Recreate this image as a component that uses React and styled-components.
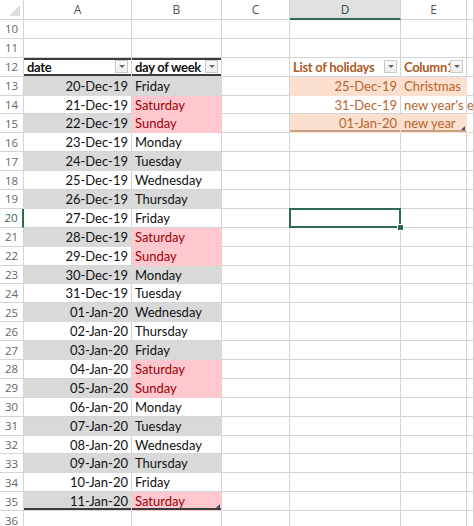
import React from "react";
import styled, { createGlobalStyle, css } from "styled-components";

const GlobalStyle = createGlobalStyle`
  html, body {
    margin: 0;
    padding: 0;
    background: #ffffff;
    overflow: hidden;
  }
`;

const GRID = "#d4d4d4";
const BAND = "#d9d9d9";
const PINK = "#ffc7ce";
const PINK_TEXT = "#9c0006";
const ORANGE = "#fbdfcf";
const ORANGE_TEXT = "#b9642c";
const SELECT = "#2e6b50";

const Sheet = styled.div`
  display: grid;
  grid-template-columns: 24px 108px 90px 68px 111px 66px 1fr;
  grid-template-rows: 20px repeat(27, 18.9px);
  width: 474px;
  height: 526px;
  overflow: hidden;
  font-family: Lato, "Liberation Sans", sans-serif;
  font-size: 13px;
  color: #111;
`;

const Corner = styled.div`
  position: relative;
  box-sizing: border-box;
  border-right: 1px solid ${GRID};
  border-bottom: 1px solid ${GRID};
  &::after {
    content: "";
    position: absolute;
    right: 3px;
    bottom: 3px;
    width: 0;
    height: 0;
    border-left: 11px solid transparent;
    border-bottom: 11px solid #dcdcdc;
  }
`;

const ColHead = styled.div`
  box-sizing: border-box;
  display: flex;
  align-items: center;
  justify-content: center;
  font-family: "Open Sans", "Noto Sans", sans-serif;
  font-size: 12px;
  color: #555;
  border-right: 1px solid ${GRID};
  border-bottom: 1px solid ${GRID};
  ${(p) =>
    p.$active &&
    css`
      background: #e1e1e1;
      color: #2b4f3e;
      border-bottom: 2px solid ${SELECT};
    `}
`;

const RowHead = styled.div`
  box-sizing: border-box;
  display: flex;
  align-items: center;
  justify-content: center;
  font-family: "Open Sans", "Noto Sans", sans-serif;
  font-size: 11.5px;
  color: #666;
  border-right: 1px solid ${GRID};
  border-bottom: 1px solid ${GRID};
  ${(p) =>
    p.$active &&
    css`
      color: ${SELECT};
      border-right: 2px solid ${SELECT};
    `}
`;

const Cell = styled.div`
  box-sizing: border-box;
  display: flex;
  align-items: center;
  justify-content: ${(p) => (p.$align === "right" ? "flex-end" : "flex-start")};
  padding: 0 3px;
  min-width: 0;
  white-space: nowrap;
  background: ${(p) => p.$fill || "transparent"};
  color: ${(p) => p.$color || "#111"};
  font-weight: ${(p) => (p.$bold ? 700 : 400)};
  letter-spacing: ${(p) => (p.$bold ? "-0.3px" : "0")};
  border-right: 1px solid ${(p) => p.$fill || GRID};
  border-bottom: 1px solid ${(p) => p.$fill || GRID};
  box-shadow: ${(p) =>
    [
      p.$top && `inset 0 2px 0 ${p.$top}`,
      p.$bottom && `inset 0 -2px 0 ${p.$bottom}`,
    ]
      .filter(Boolean)
      .join(", ") || "none"};
  ${(p) =>
    p.$selected &&
    css`
      position: relative;
      &::after {
        content: "";
        position: absolute;
        left: -1px;
        top: -1px;
        right: -1px;
        bottom: -1px;
        border: 2px solid ${SELECT};
      }
      &::before {
        content: "";
        position: absolute;
        right: -4px;
        bottom: -4px;
        width: 5px;
        height: 5px;
        background: ${SELECT};
        border: 1px solid #fff;
        z-index: 2;
      }
    `}
  ${(p) =>
    p.$handle &&
    css`
      position: relative;
      &::after {
        content: "";
        position: absolute;
        right: 1px;
        bottom: 2px;
        width: 0;
        height: 0;
        border-left: 4px solid transparent;
        border-bottom: 4px solid #3d4b6b;
      }
    `}
`;

const HeadText = styled.span`
  flex: 1;
  min-width: 0;
  overflow: hidden;
`;

const FilterButton = styled.span`
  flex: none;
  box-sizing: border-box;
  width: 13px;
  height: 13px;
  margin-right: 0;
  border: 1px solid #c8c8c8;
  background: linear-gradient(#fbfbfb, #ececec);
  display: flex;
  align-items: center;
  justify-content: center;
  &::after {
    content: "";
    width: 0;
    height: 0;
    border-left: 3px solid transparent;
    border-right: 3px solid transparent;
    border-top: 3px solid #6a6a6a;
  }
`;

const COLS = ["A", "B", "C", "D", "E", "F"];
const MONTHS = ["Jan", "Feb", "Mar", "Apr", "May", "Jun", "Jul", "Aug", "Sep", "Oct", "Nov", "Dec"];
const DAYS = ["Sunday", "Monday", "Tuesday", "Wednesday", "Thursday", "Friday", "Saturday"];

const fmt = (d) =>
  `${String(d.getUTCDate()).padStart(2, "0")}-${MONTHS[d.getUTCMonth()]}-${String(d.getUTCFullYear()).slice(2)}`;

const dates = Array.from({ length: 23 }, (_, i) => {
  const d = new Date(Date.UTC(2019, 11, 20 + i));
  return { date: fmt(d), day: DAYS[d.getUTCDay()], weekend: d.getUTCDay() % 6 === 0 };
});

const holidays = [
  { date: "25-Dec-19", name: "Christmas" },
  { date: "31-Dec-19", name: "new year's eve" },
  { date: "01-Jan-20", name: "new year" },
];

const DARK = "#3c3c3c";

function cellProps(r, col) {
  // first table: A12:B35
  if (col === "A" || col === "B") {
    if (r === 12) {
      return { $bold: true, $top: DARK, $bottom: DARK, header: col === "A" ? "date" : "day of week" };
    }
    if (r >= 13 && r <= 35) {
      const item = dates[r - 13];
      const band = (r - 13) % 2 === 0 ? BAND : null;
      const base = { $bottom: r === 35 ? DARK : null, $handle: r === 35 && col === "B" };
      if (col === "A") return { ...base, $align: "right", $fill: band, text: item.date };
      if (item.weekend) return { ...base, $fill: PINK, $color: PINK_TEXT, text: item.day };
      return { ...base, $fill: band, text: item.day };
    }
  }
  // holidays table: D12:E15
  if (col === "D" || col === "E") {
    if (r === 12) {
      return { $bold: true, $color: "#ad5b25", header: col === "D" ? "List of holidays" : "Column1" };
    }
    if (r >= 13 && r <= 15) {
      const h = holidays[r - 13];
      const fill = r === 14 ? null : ORANGE;
      const base = { $fill: fill, $color: ORANGE_TEXT, $bottom: r === 15 ? "#c9a283" : null, $handle: r === 15 && col === "E" };
      if (col === "D") return { ...base, $align: "right", text: h.date };
      return { ...base, text: h.name };
    }
  }
  if (col === "D" && r === 20) return { $selected: true };
  return {};
}

const rows = Array.from({ length: 27 }, (_, i) => 10 + i);

export default function App() {
  return (
    <>
      <GlobalStyle />
      <Sheet>
        <Corner />
        {COLS.map((c) => (
          <ColHead key={c} $active={c === "D"}>
            {c === "F" ? "" : c}
          </ColHead>
        ))}
        {rows.map((r) => (
          <React.Fragment key={r}>
            <RowHead $active={r === 20}>{r}</RowHead>
            {COLS.map((c) => {
              const { text, header, ...rest } = cellProps(r, c);
              return (
                <Cell key={c} {...rest}>
                  {header ? (
                    <>
                      <HeadText>{header}</HeadText>
                      <FilterButton />
                    </>
                  ) : (
                    text
                  )}
                </Cell>
              );
            })}
          </React.Fragment>
        ))}
      </Sheet>
    </>
  );
}
